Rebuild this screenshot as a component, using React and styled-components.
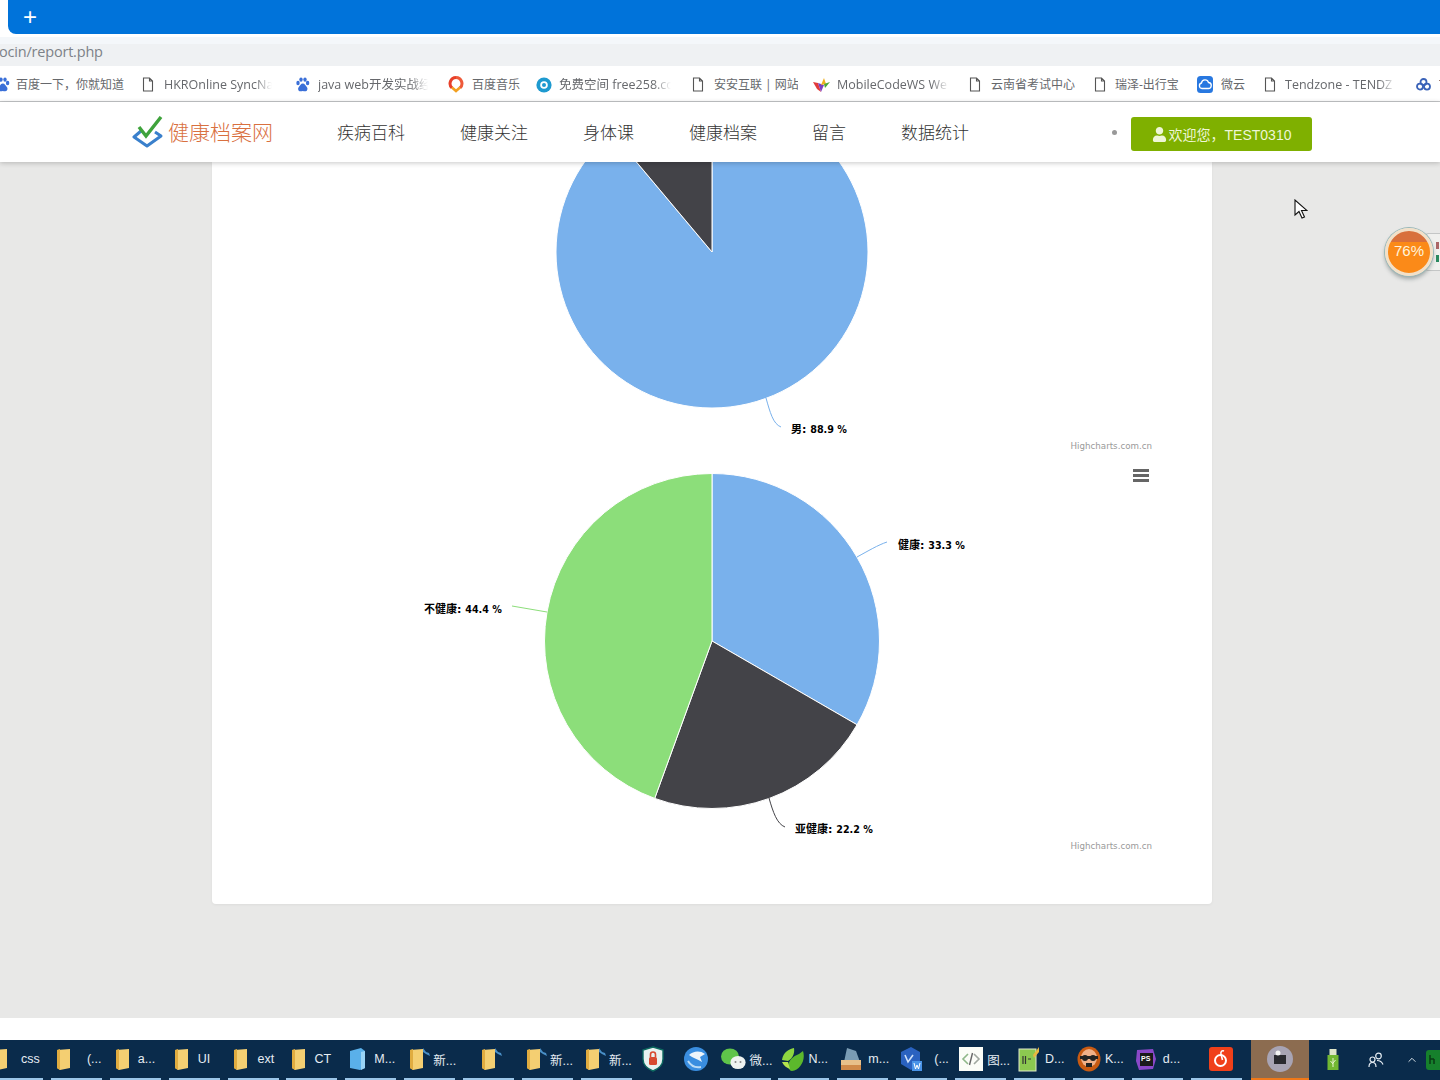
import React from "react";
import styled, { createGlobalStyle } from "styled-components";
import { FaUser } from "react-icons/fa";

const GlobalStyle = createGlobalStyle`
  html, body {
    margin: 0;
    padding: 0;
    background: #e8e8e7;
  }
  body {
    font-family: "Liberation Sans", "Noto Sans CJK SC", sans-serif;
  }
`;

const Screen = styled.div`
  position: relative;
  width: 1440px;
  height: 1080px;
  overflow: hidden;
  display: flex;
  flex-direction: column;
`;

const TabStrip = styled.div`
  height: 34px;
  flex-shrink: 0;
  background: #fff;
  display: flex;
`;

const TabEnd = styled.div`
  flex: 1;
  margin-left: 8px;
  background: #0073da;
  border-bottom-left-radius: 8px;
  color: #fff;
  font-size: 24px;
  line-height: 33px;
  padding-left: 15px;
`;

const AddressBar = styled.div`
  height: 32px;
  flex-shrink: 0;
  box-sizing: border-box;
  background: linear-gradient(#f4f7fa 7px, #eff1f3 7px);
  border-top: 3px solid #fff;
  padding-top: 5px;
  color: #7d8288;
  font-size: 14.5px;
  line-height: 20px;
  font-family: "Open Sans", "Liberation Sans", sans-serif;
  letter-spacing: -0.2px;
  white-space: nowrap;
  span {
    display: block;
    margin-left: -1px;
  }
`;

const BookmarkBar = styled.div`
  height: 36px;
  flex-shrink: 0;
  box-sizing: border-box;
  background: #fff;
  border-bottom: 1px solid #c4c6c8;
  display: flex;
  align-items: center;
  padding-top: 2px;
  margin-left: -5px;
  width: 1460px;
`;

const Bookmark = styled.div`
  display: flex;
  align-items: center;
  flex-shrink: 0;
  margin-right: ${(p) => p.$gap}px;
`;

const BookmarkLabel = styled.span`
  display: block;
  width: ${(p) => p.$width}px;
  margin-left: ${(p) => p.$offset}px;
  overflow: hidden;
  white-space: nowrap;
  font-size: ${(p) => (p.$fade ? 12.5 : 12)}px;
  line-height: 18px;
  color: #66686c;
  font-family: "Open Sans", "Noto Sans CJK SC", sans-serif;
  ${(p) =>
    p.$fade &&
    "-webkit-mask-image: linear-gradient(to right, #000 84%, transparent 100%);"}
`;

const NavBar = styled.div`
  height: 60px;
  flex-shrink: 0;
  background: #fff;
  display: flex;
  align-items: center;
  padding: 0 128px 0 132px;
  box-shadow: 0 1px 5px rgba(0, 0, 0, 0.22);
  position: relative;
  z-index: 2;
`;

const Logo = styled.div`
  display: flex;
  align-items: center;
  width: 205px;
  flex-shrink: 0;
  gap: 5px;
`;

const LogoText = styled.span`
  color: #d9703f;
  font-size: 21px;
  font-family: "Noto Sans CJK SC", sans-serif;
  font-weight: 300;
  line-height: 30px;
  margin-top: -2px;
`;

const NavList = styled.div`
  display: flex;
  gap: 55px;
`;

const NavLink = styled.a`
  color: #333;
  font-size: 17px;
  line-height: 26px;
  font-family: "Noto Sans CJK SC", sans-serif;
  font-weight: 300;
`;

const NavDot = styled.i`
  display: block;
  width: 5px;
  height: 5px;
  border-radius: 50%;
  background: #999;
  margin: 0 14px 0 auto;
`;

const UserButton = styled.button`
  width: 181px;
  height: 34px;
  margin-top: 4px;
  border: 0;
  border-radius: 3px;
  background: #7fb000;
  color: #eef6d6;
  display: flex;
  align-items: center;
  justify-content: center;
  gap: 2px;
  padding: 0;
  font-size: 14px;
  font-family: "Liberation Sans", "Noto Sans CJK SC", sans-serif;
`;

const Content = styled.div`
  flex: 1;
  min-height: 0;
  background: #e8e8e7;
  overflow: hidden;
  padding-left: 212px;
`;

const Card = styled.div`
  width: 1000px;
  height: 742px;
  background: #fff;
  border-radius: 0 0 4px 4px;
  box-shadow: 0 1px 3px rgba(0, 0, 0, 0.05);
`;

const ChartSvg = styled.svg`
  display: block;
  width: 1000px;
  height: ${(p) => p.$height}px;
`;

const LabelText = styled.text`
  font-family: "DejaVu Sans", "Noto Sans CJK SC", sans-serif;
  font-size: 11px;
  font-weight: 700;
  fill: #000;
  tspan {
    font-size: 9.6px;
  }
`;

const Credit = styled.text`
  font-family: "DejaVu Sans", sans-serif;
  font-size: 8.7px;
  fill: #999;
  text-anchor: end;
`;

const WhiteStrip = styled.div`
  height: 22px;
  flex-shrink: 0;
  background: #fff;
`;

const Taskbar = styled.div`
  height: 40px;
  flex-shrink: 0;
  background: #0a2b4b;
  display: flex;
`;

const TaskItems = styled.div`
  display: flex;
  gap: 7.9px;
  margin-left: -8px;
`;

const TaskItem = styled.div`
  box-sizing: border-box;
  flex-shrink: 0;
  width: ${(p) => p.$width || 51}px;
  height: 40px;
  padding-left: ${(p) => p.$pad ?? 4}px;
  display: flex;
  align-items: center;
  gap: ${(p) => p.$gap ?? 6}px;
  color: #e6edf3;
  font-size: 12.5px;
  white-space: nowrap;
  font-family: "Liberation Sans", "Noto Sans CJK SC", sans-serif;
  border-bottom: 2px solid ${(p) => (p.$plain ? "transparent" : "#9cc6e8")};
  svg {
    flex-shrink: 0;
  }
`;

const ActiveTask = styled.div`
  width: 58px;
  height: 40px;
  box-sizing: border-box;
  flex-shrink: 0;
  margin-left: 1px;
  background: #8c6c50;
  border-bottom: 2px solid #f07818;
  display: flex;
  align-items: center;
  justify-content: center;
`;

const Tray = styled.div`
  display: flex;
  align-items: center;
  margin-left: 13px;
  width: 131px;
  flex-shrink: 0;
`;

const TraySlot = styled.div`
  display: flex;
  justify-content: center;
  flex-shrink: 0;
  width: ${(p) => p.$width}px;
`;

const Cursor = styled.svg`
  position: absolute;
  left: 1294px;
  top: 199px;
`;

const Meter = styled.div`
  position: absolute;
  left: 1385px;
  top: 228px;
  width: 48px;
  height: 48px;
  box-sizing: border-box;
  border-radius: 50%;
  border: 3px solid #f2e0c8;
  background: linear-gradient(#d8703c 0 26%, #fb8a18 26%);
  box-shadow: 0 0 0 1px #9ab8b8, 0 3px 4px rgba(40, 60, 60, 0.4);
  color: #fff3dc;
  font-size: 15px;
  line-height: 40px;
  text-align: center;
  z-index: 3;
`;

const MeterTab = styled.div`
  position: absolute;
  left: 1425px;
  top: 233px;
  width: 20px;
  height: 38px;
  box-sizing: border-box;
  background: #f0f0ee;
  border: 1px solid #c4c6c6;
  border-radius: 3px;
  z-index: 2;
  &::before {
    content: "";
    position: absolute;
    left: 10px;
    top: 8px;
    width: 3px;
    height: 7px;
    background: #a66;
  }
  &::after {
    content: "";
    position: absolute;
    left: 10px;
    top: 21px;
    width: 3px;
    height: 7px;
    background: #2a8a60;
  }
`;

function DocIcon() {
  return (
    <svg width="12" height="15" viewBox="0 0 12 15">
      <path d="M1.5 1h6l3 3v10h-9z M7.5 1v3h3" fill="#fff" stroke="#555" strokeWidth="1.1" />
    </svg>
  );
}

function PawIcon() {
  return (
    <svg width="15" height="16" viewBox="0 0 15 16" fill="#3a6fd8">
      <ellipse cx="3" cy="6" rx="1.7" ry="2.2" />
      <ellipse cx="6" cy="2.6" rx="1.7" ry="2.2" />
      <ellipse cx="10" cy="2.6" rx="1.7" ry="2.2" />
      <ellipse cx="12.6" cy="6" rx="1.7" ry="2.2" />
      <path d="M7.8 6.5c2 0 2.6 2 4 3.4 1.4 1.6.5 4.4-1.6 4.4-1 0-1.6-.4-2.4-.4s-1.4.4-2.4.4c-2.1 0-3-2.8-1.6-4.4 1.4-1.4 2-3.4 4-3.4z" />
    </svg>
  );
}

function QIcon() {
  return (
    <svg width="16" height="17" viewBox="0 0 16 17" fill="none">
      <path d="M8 1.5a6 6 0 0 0-4 10.4" stroke="#e8402a" strokeWidth="3" />
      <path d="M8 1.5a6 6 0 0 1 4 10.4" stroke="#ee5a3a" strokeWidth="3" />
      <path d="M4 11.5 8 15l4-3.5" stroke="#f2a020" strokeWidth="2.6" />
    </svg>
  );
}

function RingIcon() {
  return (
    <svg width="16" height="16" viewBox="0 0 16 16">
      <circle cx="8" cy="8" r="7.6" fill="#1e9ad0" />
      <circle cx="8" cy="8" r="3.8" fill="#fff" />
      <circle cx="8" cy="8" r="2" fill="#1e9ad0" />
    </svg>
  );
}

function MobileIcon() {
  return (
    <svg width="17" height="16" viewBox="0 0 17 16">
      <path d="M0 5l5 1 3 9-4-3z" fill="#e23a3a" />
      <path d="M5 6l3 9 3-7z" fill="#7b3fc4" />
      <path d="M8 8l3-7 2 6z" fill="#f0b020" />
      <path d="M11 7l6-2-5 6z" fill="#4aa83a" />
    </svg>
  );
}

function CloudIcon() {
  return (
    <svg width="16" height="17" viewBox="0 0 16 17">
      <rect width="16" height="17" rx="3.5" fill="#2878e0" />
      <path d="M5 12.5a2.8 2.8 0 0 1-.5-5.5 3.6 3.6 0 0 1 7-.5 3 3 0 0 1-.5 6z" fill="none" stroke="#fff" strokeWidth="1.3" />
    </svg>
  );
}

function RingsIcon() {
  return (
    <svg width="15" height="13" viewBox="0 0 15 13" fill="none" stroke="#3a62b8" strokeWidth="1.8">
      <circle cx="4" cy="8.6" r="3" />
      <circle cx="11" cy="8.6" r="3" />
      <circle cx="7.5" cy="4" r="3" />
    </svg>
  );
}

const bookmarks = [
  { icon: <PawIcon />, label: "百度一下，你就知道", w: 108, off: 6, gap: 18 },
  { icon: <DocIcon />, label: "HKROnline SyncNa", w: 108, off: 10, gap: 23, fade: true },
  { icon: <PawIcon />, label: "java web开发实战经", w: 110, off: 8, gap: 20, fade: true },
  { icon: <QIcon />, label: "百度音乐", w: 48, off: 8, gap: 16 },
  { icon: <RingIcon />, label: "免费空间 free258.co", w: 112, off: 7, gap: 21, fade: true },
  { icon: <DocIcon />, label: "安安互联 | 网站", w: 84, off: 10, gap: 15 },
  { icon: <MobileIcon />, label: "MobileCodeWS We", w: 112, off: 7, gap: 20, fade: true },
  { icon: <DocIcon />, label: "云南省考试中心", w: 84, off: 10, gap: 19 },
  { icon: <DocIcon />, label: "瑞泽-出行宝", w: 65, off: 9, gap: 17 },
  { icon: <CloudIcon />, label: "微云", w: 24, off: 8, gap: 19 },
  { icon: <DocIcon />, label: "Tendzone - TENDZ", w: 111, off: 9, gap: 20, fade: true },
  { icon: <RingsIcon />, label: "T", w: 20, off: 8, gap: 0 },
];

function LogoMark() {
  return (
    <svg width="31" height="32" viewBox="0 0 31 32" fill="none">
      <path d="M9 15 2 21l13 9 14-10-6-4" stroke="#3a80cc" strokeWidth="3" strokeLinejoin="round" />
      <path d="M7 11l7 9L29 1" stroke="#3fa33c" strokeWidth="3.4" />
    </svg>
  );
}

function slice(cx, cy, r, from, to) {
  const rad = (a) => (a * Math.PI) / 180;
  const x1 = cx + r * Math.sin(rad(from));
  const y1 = cy - r * Math.cos(rad(from));
  const x2 = cx + r * Math.sin(rad(to));
  const y2 = cy - r * Math.cos(rad(to));
  const large = to - from > 180 ? 1 : 0;
  return `M${cx} ${cy}L${x1} ${y1}A${r} ${r} 0 ${large} 1 ${x2} ${y2}Z`;
}

const BLUE = "#79b1ec";
const DARK = "#434348";
const GREEN = "#8cde7a";

function DataLabel({ x, y, name, value }) {
  return (
    <LabelText x={x} y={y}>
      {name}: <tspan>{value} %</tspan>
    </LabelText>
  );
}

function GenderChart() {
  return (
    <ChartSvg $height={296} viewBox="212 162 1000 296">
      <path d={slice(712, 252, 156, 0, 320)} fill={BLUE} stroke="#fff" />
      <path d={slice(712, 252, 156, 320, 360)} fill={DARK} stroke="#fff" />
      <path d="M766 398C770 412 773 424 781 427" fill="none" stroke={BLUE} />
      <DataLabel x="791" y="433" name="男" value="88.9" />
      <Credit x="1152" y="449">Highcharts.com.cn</Credit>
    </ChartSvg>
  );
}

function HealthChart() {
  return (
    <ChartSvg $height={400} viewBox="212 458 1000 400">
      <path d={slice(712, 641, 167.5, 0, 120)} fill={BLUE} stroke="#fff" />
      <path d={slice(712, 641, 167.5, 120, 200)} fill={DARK} stroke="#fff" />
      <path d={slice(712, 641, 167.5, 200, 360)} fill={GREEN} stroke="#fff" />
      <path d="M857 557C868 551 878 545 887 542" fill="none" stroke={BLUE} />
      <path d="M512 606L547 612" fill="none" stroke={GREEN} />
      <path d="M769 798C773 812 777 824 785 827" fill="none" stroke={DARK} />
      <DataLabel x="898" y="549" name="健康" value="33.3" />
      <DataLabel x="424" y="613" name="不健康" value="44.4" />
      <DataLabel x="795" y="833" name="亚健康" value="22.2" />
      <path d="M1133 470.5h16M1133 475.5h16M1133 480.5h16" stroke="#666" strokeWidth="3" />
      <Credit x="1152" y="849">Highcharts.com.cn</Credit>
    </ChartSvg>
  );
}

function Folder({ net }) {
  return (
    <svg width={net ? 24 : 15} height="24" viewBox={net ? "0 0 24 24" : "0 0 15 24"}>
      <path d="M1 3l13-1v19l-10 2-3-2z" fill="#f4cf72" />
      <path d="M1 3l3-1v21l-3-2z" fill="#e0ac40" />
      {net && <path d="M14 1l3 4 3 1 1 3-4-2-3-2z" fill="#4a90c8" />}
    </svg>
  );
}

const taskApps = {
  cube: (
    <svg width="17" height="22" viewBox="0 0 17 22">
      <path d="M1 3l11-3 4 3v17l-5 2-10-2z" fill="#5ab0ea" />
      <path d="M12 4l4-1v17l-4 2z" fill="#9ad4f6" />
    </svg>
  ),
  shield: (
    <svg width="22" height="26" viewBox="0 0 22 26">
      <path d="M11 1l10 3v9c0 6-5 10-10 12C6 23 1 19 1 13V4z" fill="#e8f2f0" stroke="#0d6a60" strokeWidth="1.4" />
      <rect x="7" y="11" width="8" height="8" rx="1.5" fill="#d84a30" />
      <path d="M8.5 11V8.5a2.5 2.5 0 0 1 5 0V11" fill="none" stroke="#d84a30" strokeWidth="1.6" />
    </svg>
  ),
  ball: (
    <svg width="24" height="24" viewBox="0 0 24 24">
      <circle cx="12" cy="12" r="12" fill="#3a8ee0" />
      <path d="M5 8c4-4 11-5 16-1l-5 3 2 5c-5-3-9-4-13-7z" fill="#eef5fb" />
      <path d="M4 14c3 5 8 7 13 6" fill="none" stroke="#bcdcf6" strokeWidth="2" />
    </svg>
  ),
  wechat: (
    <svg width="25" height="24" viewBox="0 0 25 24">
      <ellipse cx="9" cy="9.5" rx="9" ry="8" fill="#5fc44a" />
      <ellipse cx="17" cy="15.5" rx="7.6" ry="6.6" fill="#eef2f0" />
      <circle cx="14.5" cy="15" r="1" fill="#888" />
      <circle cx="19.5" cy="15" r="1" fill="#888" />
    </svg>
  ),
  leaf: (
    <svg width="24" height="24" viewBox="0 0 24 24">
      <path d="M1 13C2 5 8 2 13 1c1 6-2 11-6 13z" fill="#8ed640" />
      <path d="M7 20c0-6 5-11 11-13l4-3c3 9-3 19-11 20-2 0-3-2-4-4z" fill="#5cb82c" />
      <path d="M1 15c2 4 5 6 8 7l-2-7z" fill="#b4e44e" />
    </svg>
  ),
  box: (
    <svg width="22" height="26" viewBox="0 0 22 26">
      <path d="M7 2l9 3 4 11H4z" fill="#7a9cb4" />
      <path d="M1 14h20v5H1z" fill="#e8c08a" />
      <path d="M1 19h20v5H1z" fill="#d08a4a" />
    </svg>
  ),
  vs: (
    <svg width="23" height="26" viewBox="0 0 23 26">
      <path d="M1 6l10-5 9 5v12l-9 6-10-6z" fill="#2a62c0" />
      <path d="M5 9l3 7 5-7" fill="none" stroke="#cfe2fa" strokeWidth="1.6" />
      <rect x="12" y="15" width="10" height="10" fill="#4a94e8" />
      <path d="M14 17l1.5 6 1.5-4 1.5 4 1.5-6" fill="none" stroke="#fff" strokeWidth="1" />
    </svg>
  ),
  code: (
    <svg width="24" height="24" viewBox="0 0 24 24" fill="none">
      <rect width="24" height="24" fill="#fbfdf8" />
      <path d="M9 7l-5 5 5 5" stroke="#8fb88a" strokeWidth="1.6" />
      <path d="M15 7l5 5-5 5" stroke="#a0a8a0" strokeWidth="1.6" />
      <path d="M13.5 6l-3 12" stroke="#666" strokeWidth="1.4" />
    </svg>
  ),
  notes: (
    <svg width="22" height="26" viewBox="0 0 22 26">
      <rect x="1" y="3" width="17" height="22" fill="#8cc850" stroke="#dfe8c8" />
      <path d="M5 10v8M7.5 10v8M10 13h3" stroke="#333" strokeWidth="1.2" />
      <path d="M15 9l6-8v5l-5 6z" fill="#e8b840" />
    </svg>
  ),
  mask: (
    <svg width="24" height="26" viewBox="0 0 24 26">
      <ellipse cx="12" cy="13" rx="11.5" ry="12.5" fill="#c85a12" />
      <ellipse cx="12" cy="12" rx="8" ry="9" fill="#f0b088" />
      <path d="M3 10h18v3H3z" fill="#222" />
      <circle cx="8" cy="12" r="3" fill="#222" />
      <circle cx="16" cy="12" r="3" fill="#222" />
      <path d="M9 17h6v4H9z" fill="#222" />
    </svg>
  ),
  ps: (
    <svg width="22" height="23" viewBox="0 0 22 23">
      <path d="M2 2l16-1 3 10-3 10-14 1-3-9z" fill="#8a48c8" />
      <rect x="5" y="5" width="13" height="13" fill="#1a1a1a" />
      <text x="6" y="13" fontSize="7" fontWeight="700" fill="#fff" fontFamily="Liberation Sans">PS</text>
    </svg>
  ),
  netease: (
    <svg width="24" height="24" viewBox="0 0 24 24" fill="none">
      <rect width="24" height="24" rx="3" fill="#f0401a" />
      <circle cx="11.5" cy="13.5" r="5.5" stroke="#fff" strokeWidth="2" />
      <path d="M15 4c-2-.8-3.5.6-3 3l1.500 6" stroke="#fff" strokeWidth="1.6" />
    </svg>
  ),
};

const tasks = [
  { icon: <Folder />, label: "css", gap: 13, pad: 1 },
  { icon: <Folder />, label: "(...", gap: 16, pad: 5 },
  { icon: <Folder />, label: "a...", gap: 8, pad: 5 },
  { icon: <Folder />, label: "UI", gap: 9, pad: 5 },
  { icon: <Folder />, label: "ext", gap: 10, pad: 5 },
  { icon: <Folder />, label: "CT", gap: 8, pad: 5 },
  { icon: taskApps.cube, label: "M...", gap: 8, pad: 4 },
  { icon: <Folder net />, label: "新...", gap: 0, pad: 5 },
  { icon: <Folder net />, label: "", gap: 0, pad: 18 },
  { icon: <Folder net />, label: "新...", gap: 0, pad: 4 },
  { icon: <Folder net />, label: "新...", gap: 0, pad: 4 },
  { icon: taskApps.shield, plain: true, width: 36, pad: 2 },
  { icon: taskApps.ball, plain: true, width: 28, pad: 0 },
  { icon: taskApps.wechat, label: "微...", gap: 4, pad: 1 },
  { icon: taskApps.leaf, label: "N...", gap: 3, pad: 3 },
  { icon: taskApps.box, label: "m...", gap: 6, pad: 3 },
  { icon: taskApps.vs, label: "(...", gap: 11, pad: 4 },
  { icon: taskApps.code, label: "图...", gap: 4, pad: 4 },
  { icon: taskApps.notes, label: "D...", gap: 5, pad: 4 },
  { icon: taskApps.mask, label: "K...", gap: 4, pad: 4 },
  { icon: taskApps.ps, label: "d...", gap: 6, pad: 3 },
  { icon: taskApps.netease, pad: 18 },
];

export default function App() {
  return (
    <Screen>
      <GlobalStyle />
      <TabStrip>
        <TabEnd>+</TabEnd>
      </TabStrip>
      <AddressBar>
        <span>ocin/report.php</span>
      </AddressBar>
      <BookmarkBar>
        {bookmarks.map((b) => (
          <Bookmark key={b.label} $gap={b.gap}>
            {b.icon}
            <BookmarkLabel $width={b.w} $offset={b.off} $fade={b.fade}>
              {b.label}
            </BookmarkLabel>
          </Bookmark>
        ))}
      </BookmarkBar>
      <NavBar>
        <Logo>
          <LogoMark />
          <LogoText>健康档案网</LogoText>
        </Logo>
        <NavList>
          <NavLink>疾病百科</NavLink>
          <NavLink>健康关注</NavLink>
          <NavLink>身体课</NavLink>
          <NavLink>健康档案</NavLink>
          <NavLink>留言</NavLink>
          <NavLink>数据统计</NavLink>
        </NavList>
        <NavDot />
        <UserButton>
          <FaUser size={15} />
          欢迎您，TEST0310
        </UserButton>
      </NavBar>
      <Content>
        <Card>
          <GenderChart />
          <HealthChart />
        </Card>
      </Content>
      <WhiteStrip />
      <Taskbar>
        <TaskItems>
          {tasks.map((t, i) => (
            <TaskItem key={i} $width={t.width} $pad={t.pad} $gap={t.gap} $plain={t.plain}>
              {t.icon}
              {t.label}
            </TaskItem>
          ))}
          <ActiveTask>
            <svg width="26" height="26" viewBox="0 0 26 26">
              <circle cx="13" cy="13" r="13" fill="#a8a4b4" />
              <path d="M7 9h12v9H7z" fill="#2a2a30" />
              <circle cx="11" cy="7" r="2.5" fill="#f4f4f4" />
            </svg>
          </ActiveTask>
        </TaskItems>
        <Tray>
          <TraySlot $width={22}>
            <svg width="12" height="22" viewBox="0 0 12 22">
              <rect x="2.5" y="0" width="7" height="6" fill="#dfe6c8" />
              <rect x="0.5" y="6" width="11" height="15" fill="#72b832" />
              <path d="M6 9v9M6 15l-2.5-3M6 14l2.5-3" stroke="#e8f4d0" strokeWidth="1" fill="none" />
            </svg>
          </TraySlot>
          <TraySlot $width={64}>
            <svg width="16" height="16" viewBox="0 0 16 16" fill="none" stroke="#e6edf3" strokeWidth="1.2">
              <circle cx="10.5" cy="4" r="2.8" />
              <circle cx="4.5" cy="7.5" r="2.5" />
              <path d="M1 15c0-3 1.5-4.5 3.5-4.5S8 12 8 15M9 8.5c3 0 5 1.5 6 4" />
            </svg>
          </TraySlot>
          <TraySlot $width={8}>
            <svg width="14" height="8" viewBox="0 0 14 8" fill="none" stroke="#e6edf3" strokeWidth="1.6">
              <path d="M1 7l6-6 6 6" />
            </svg>
          </TraySlot>
          <TraySlot $width={37}>
            <svg width="16" height="20" viewBox="0 0 16 20">
              <rect width="16" height="20" rx="3" fill="#16802c" />
              <path d="M4 5v9M8 9v5M4 9h4" stroke="#0a3a14" strokeWidth="1.5" fill="none" />
            </svg>
          </TraySlot>
        </Tray>
      </Taskbar>
      <Cursor width="14" height="21" viewBox="0 0 14 21">
        <path d="M1 1v15l4-3.5 3 6.5 2.5-1-3-6.5H13z" fill="#fff" stroke="#111" strokeWidth="1.1" />
      </Cursor>
      <MeterTab />
      <Meter>76%</Meter>
    </Screen>
  );
}
